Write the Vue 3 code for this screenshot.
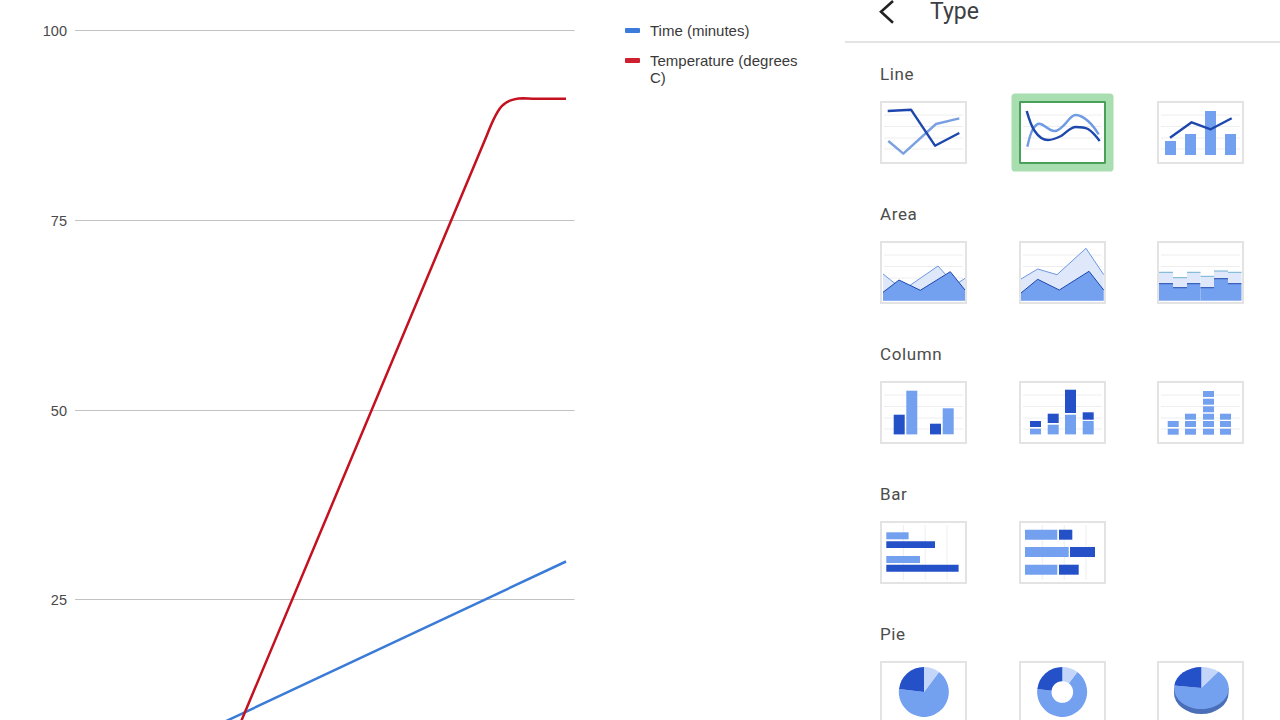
<script setup>
const DARK = '#2450c8'
const DLINE = '#1d47ad'
const LIGHT = '#74a0f0'
const LLINE = '#6b97e2'
const PALE = '#dfe8fb'
const GRID = '#eeeeee'

const rect = (x, y, w, h, fill = LIGHT) => ({ d: `M${x} ${y}h${w}v${h}h${-w}Z`, fill })
const line = (d, stroke, sw = 2.4) => ({ d, stroke, 'stroke-width': sw, fill: 'none', 'stroke-linejoin': 'round' })
const area = (d, fill) => ({ d, fill })
const hgrid = [14, 25.5, 37, 48].map((y) => line(`M4 ${y}H83`, GRID, 1))
const vgrid = [23.3, 45.2, 67].map((x) => line(`M${x} 4V59`, GRID, 1))

const stepX = [2, 16, 30, 43.5, 57, 71, 84.5]
const stepTopLight = [31.3, 36.7, 31.3, 35.3, 30, 31.3]
const stepTopDark = [42.7, 46.7, 42.7, 46.7, 37.7, 42.7]
const steps = []
stepTopLight.forEach((top, i) => {
  const x = stepX[i]
  const w = stepX[i + 1] - x
  steps.push(rect(x, top, w, stepTopDark[i] - top, PALE))
  steps.push(rect(x, stepTopDark[i], w, 59.7 - stepTopDark[i]))
  steps.push(line(`M${x} ${top}h${w}`, '#6fb0d2', 1))
  steps.push(line(`M${x} ${stepTopDark[i]}h${w}`, '#1d47ad', 1))
})

const rows = [47.7, 40, 32.7, 25.3, 17.7, 10]
const stackRows = (x, n) => rows.slice(0, n).map((y) => rect(x, y, 11, 6))

const wedges = (cx, cy, r) => [
  { d: `M${cx} ${cy}L${cx + 15} ${cy - 20}A${r} ${r} 0 1 1 ${cx - 25} ${cy - 3}Z`, fill: LIGHT },
  { d: `M${cx} ${cy}L${cx} ${cy - r}A${r} ${r} 0 0 1 ${cx + 15} ${cy - 20}Z`, fill: '#c3d6f9' },
  { d: `M${cx} ${cy}L${cx - 25} ${cy - 3}A${r} ${r} 0 0 1 ${cx} ${cy - r}Z`, fill: DARK },
]

const sections = [
  {
    title: 'Line',
    thumbs: [
      { shapes: [...hgrid, line('M8.3 40L23.3 52.7L56 23L79.3 17.3', '#7ba0e2'), line('M7.7 10L31 8.7L55 44.7L79.3 32', DLINE)] },
      {
        selected: true,
        shapes: [
          ...hgrid,
          line('M8.3 45.7C10 39 11 33 14 28C16 24.5 18 22.5 20.7 22.7C26 23.5 29 30 35.7 30C39.5 30 42.5 26.5 45.7 23.3C49 20 52 14 56.7 14C62 14 65.5 17 69 20C73.5 24 77 29 79.7 33.3', '#6f9ae4'),
          line('M7.7 10C10 18 12 25 15.7 30C19 35 23 39 29 39C34 39 38 37 42 35C47 32 51 26 57 26C62 26 65 26 69 28C74 31 77 35 80.7 40', DLINE),
        ],
      },
      { shapes: [...hgrid, rect(8, 40, 11, 14), rect(28, 33, 11, 21), rect(48, 10, 11, 44), rect(68, 33, 11, 21), line('M13 36.7L34.7 21.3L53.7 28.3L74.7 17.3', DLINE)] },
    ],
  },
  {
    title: 'Area',
    thumbs: [
      {
        shapes: [
          ...hgrid,
          area('M3 33L23.3 49L58 25L75 44L85 37.3V59.7H3Z', PALE),
          line('M3 33L23.3 49L58 25L75 44L85 37.3', LLINE, 1),
          area('M3 51.3L19 39L40.3 49.3L70.3 30.7L85 49V59.7H3Z', LIGHT),
          line('M3 51.3L19 39L40.3 49.3L70.3 30.7L85 49', DLINE, 1),
        ],
      },
      {
        shapes: [
          ...hgrid,
          area('M2 38L18.7 28L38 33.7L67 7.3L84.7 33.7V59.7H2Z', PALE),
          line('M2 38L18.7 28L38 33.7L67 7.3L84.7 33.7', LLINE, 1),
          area('M2 52L18.7 38.3L40.3 49L70 30.3L84.7 49V59.7H2Z', LIGHT),
          line('M2 52L18.7 38.3L40.3 49L70 30.3L84.7 49', DLINE, 1),
        ],
      },
      { shapes: [...hgrid, ...steps] },
    ],
  },
  {
    title: 'Column',
    thumbs: [
      { shapes: [...hgrid, rect(13.7, 33.7, 11, 19.7, DARK), rect(26.3, 9.7, 11, 43.7), rect(50, 42.7, 11, 10.7, DARK), rect(62.7, 27.3, 11, 26)] },
      {
        shapes: [
          ...hgrid,
          rect(11, 40, 11, 6, DARK), rect(11, 47.7, 11, 5.7),
          rect(28.7, 32.7, 11, 9.3, DARK), rect(28.7, 43.7, 11, 9.7),
          rect(46, 8.7, 11, 23.3, DARK), rect(46, 33.7, 11, 19.7),
          rect(63.7, 31.3, 11, 7.4, DARK), rect(63.7, 40, 11, 13.4),
        ],
      },
      { shapes: [...hgrid, ...stackRows(10.7, 2), ...stackRows(28, 3), ...stackRows(46, 6), ...stackRows(63, 3)] },
    ],
  },
  {
    title: 'Bar',
    thumbs: [
      { shapes: [...vgrid, rect(6.3, 11.3, 22.3, 7), rect(6.3, 20.3, 48.7, 6.7, DARK), rect(6.3, 35, 33.7, 7), rect(6.3, 43.7, 72.3, 7, DARK)] },
      {
        shapes: [
          ...vgrid,
          rect(6, 8.7, 32.3, 10), rect(40, 8.7, 13.3, 10, DARK),
          rect(6, 26, 43.7, 10), rect(51, 26, 25, 10, DARK),
          rect(6, 43.7, 32.3, 10), rect(40, 43.7, 19.7, 10, DARK),
        ],
      },
    ],
  },
  {
    title: 'Pie',
    thumbs: [
      { shapes: wedges(44, 31, 25) },
      { shapes: [...wedges(43.3, 31, 25), { d: 'M32.5 31a10.8 10.8 0 1 0 21.6 0a10.8 10.8 0 1 0 -21.6 0Z', fill: '#ffffff' }] },
      {
        shapes: [
          { d: 'M17 27V32A27.3 21 0 0 0 71.6 32V27Z', fill: '#4a6fb8' },
          { d: 'M44.3 27L61.3 10.6A27.3 21 0 1 1 17.3 24.5Z', fill: LIGHT },
          { d: 'M44.3 27L44.3 6A27.3 21 0 0 1 61.3 10.6Z', fill: '#c3d6f9' },
          { d: 'M44.3 27L17.3 24.5A27.3 21 0 0 1 44.3 6Z', fill: DARK },
        ],
      },
    ],
  },
]

const gridLines = [
  { y: 30.5, label: '100' },
  { y: 220.5, label: '75' },
  { y: 410.5, label: '50' },
  { y: 599.5, label: '25' },
]
const legend = [
  { name: 'Time (minutes)', color: '#3b7bdb' },
  { name: 'Temperature (degrees C)', color: '#cf2030' },
]
</script>

<template>
  <div class="page">
    <section class="chart">
      <svg class="plot" width="625" height="720" viewBox="0 0 625 720">
        <g v-for="g in gridLines" :key="g.y">
          <line x1="75" x2="574.5" :y1="g.y" :y2="g.y" stroke="#c2c2c2" stroke-width="1" />
          <text x="67" :y="g.y + 5" text-anchor="end" class="tick">{{ g.label }}</text>
        </g>
        <path d="M222 723L566 561.5" fill="none" stroke="#3a7bd8" stroke-width="2.5" />
        <path d="M240 724L487 135C492 122 497 110 503 105C508 100 515 98.5 523 98.2C527 98.2 530 98.8 536 98.8L566 98.8" fill="none" stroke="#c4111f" stroke-width="2.5" />
      </svg>
      <ul class="legend">
        <li v-for="item in legend" :key="item.name" class="legend-item">
          <span class="swatch" :style="{ background: item.color }"></span>
          <span class="legend-text">{{ item.name }}</span>
        </li>
      </ul>
    </section>
    <aside class="panel">
      <header class="panel-head">
        <svg class="back" width="16" height="24" viewBox="0 0 16 24">
          <path d="M14 1L2 11.7L14 22.7" fill="none" stroke="#222222" stroke-width="2.6" />
        </svg>
        <span class="panel-title">Type</span>
      </header>
      <div v-for="s in sections" :key="s.title" class="group">
        <h3 class="group-title">{{ s.title }}</h3>
        <div class="thumbs">
          <svg
            v-for="(t, i) in s.thumbs"
            :key="i"
            class="thumb"
            :class="{ selected: t.selected }"
            width="87"
            height="63"
            viewBox="0 0 87 63"
          >
            <path v-for="(p, j) in t.shapes" :key="j" v-bind="p" />
          </svg>
        </div>
      </div>
    </aside>
  </div>
</template>

<style scoped>
.page {
  display: flex;
  width: 1280px;
  height: 720px;
  overflow: hidden;
  background: #ffffff;
  font-family: "Liberation Sans", Arial, sans-serif;
}
.chart {
  display: flex;
  width: 845px;
  flex: none;
}
.plot {
  display: block;
  flex: none;
}
.tick {
  font-family: "Liberation Sans", Arial, sans-serif;
  font-size: 14.5px;
  fill: #4a4a4a;
}
.legend {
  list-style: none;
  margin: 0;
  padding: 22px 40px 0 0;
  flex: 1;
  display: flex;
  flex-direction: column;
  gap: 13px;
}
.legend-item {
  display: flex;
  align-items: flex-start;
  gap: 10px;
}
.swatch {
  width: 15px;
  height: 5px;
  margin-top: 6px;
  flex: none;
  border-radius: 1px;
}
.legend-text {
  font-size: 15px;
  line-height: 17px;
  color: #3a3a3a;
}
.panel {
  flex: 1;
  font-family: Roboto, "Liberation Sans", sans-serif;
}
.panel-head {
  height: 41px;
  display: flex;
  align-items: flex-start;
  padding-left: 34px;
  border-bottom: 2px solid #e4e4e4;
}
.back {
  display: block;
  flex: none;
}
.panel-title {
  margin-left: 35px;
  font-size: 23px;
  line-height: 24px;
  color: #3c4043;
}
.group {
  height: 140px;
  padding: 21px 0 0 35px;
  box-sizing: border-box;
}
.group-title {
  margin: 0 0 17px;
  font-size: 17px;
  font-weight: 400;
  line-height: 20px;
  color: #4c4c4c;
  letter-spacing: 0.6px;
}
.thumbs {
  display: grid;
  grid-template-columns: repeat(3, 87px);
  column-gap: 51.5px;
}
.thumb {
  display: block;
  background: #ffffff;
  overflow: hidden;
  outline: 2px solid #e3e3e3;
  outline-offset: -2px;
}
.thumb.selected {
  outline: 2px solid #4aa058;
  outline-offset: -2px;
  border-radius: 1px;
  box-shadow: 0 0 0 7.5px #a8deb0;
}
</style>
